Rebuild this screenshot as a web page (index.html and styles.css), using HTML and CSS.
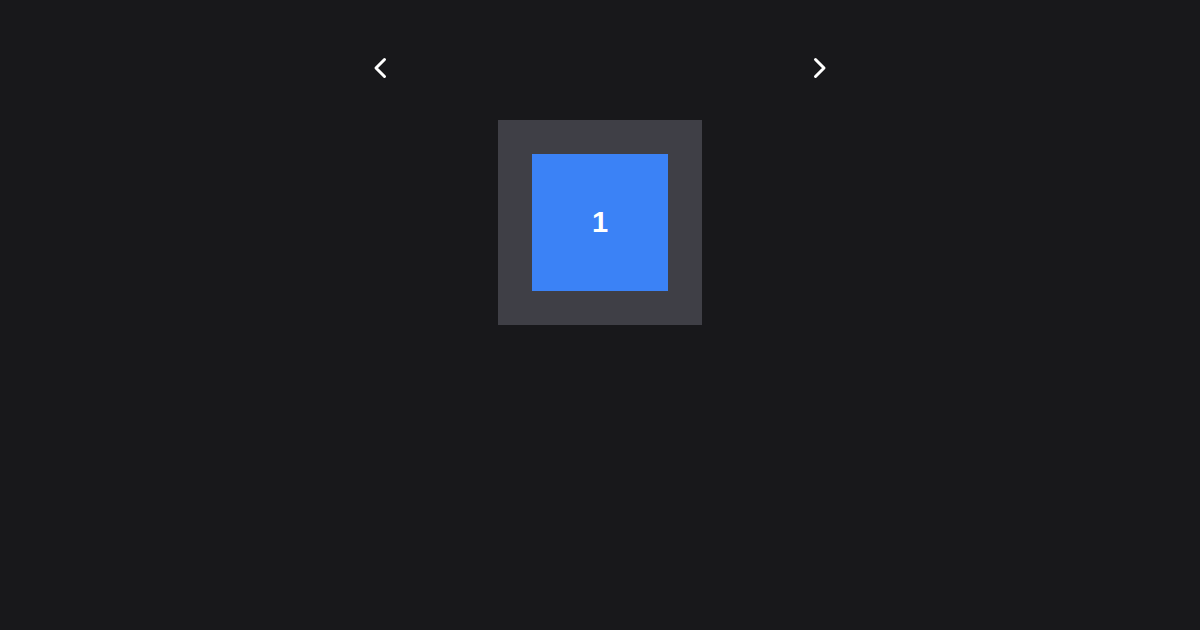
FILE: index.html
```html
<!DOCTYPE html>
<html lang="en">
<head>
<meta charset="utf-8">
<title>Carousel</title>
<link rel="stylesheet" href="styles.css">
</head>
<body>
<div class="carousel">
  <div class="nav">
    <button class="nav-btn" aria-label="Previous">
      <svg width="40" height="40" viewBox="0 0 40 40"><path d="M24.5 11.5 L16 20 L24.5 28.5" fill="none" stroke="#fff" stroke-width="3" stroke-linecap="round" stroke-linejoin="round"/></svg>
    </button>
    <button class="nav-btn" aria-label="Next">
      <svg width="40" height="40" viewBox="0 0 40 40"><path d="M15.5 11.5 L24 20 L15.5 28.5" fill="none" stroke="#fff" stroke-width="3" stroke-linecap="round" stroke-linejoin="round"/></svg>
    </button>
  </div>
  <div class="frame">
    <div class="slide">1</div>
  </div>
</div>
</body>
</html>
```
FILE: styles.css
```css
html, body {
  margin: 0;
  padding: 0;
  background: #18181b;
  height: 100%;
}
body {
  font-family: "Liberation Sans", Arial, sans-serif;
}
.carousel {
  width: 480px;
  margin: 0 auto;
  padding-top: 48px;
  display: flex;
  flex-direction: column;
  align-items: center;
}
.nav {
  width: 100%;
  height: 40px;
  display: flex;
  justify-content: space-between;
  align-items: center;
}
.nav-btn {
  width: 40px;
  height: 40px;
  padding: 0;
  border: 0;
  background: transparent;
  display: flex;
  align-items: center;
  justify-content: center;
  cursor: pointer;
}
.nav-btn svg {
  display: block;
}
.frame {
  margin-top: 32px;
  padding: 34px;
  background: #3f3f46;
}
.slide {
  width: 136px;
  height: 137px;
  background: #3b82f6;
  color: #fff;
  font-weight: 700;
  font-size: 29px;
  display: flex;
  align-items: center;
  justify-content: center;
}
```
